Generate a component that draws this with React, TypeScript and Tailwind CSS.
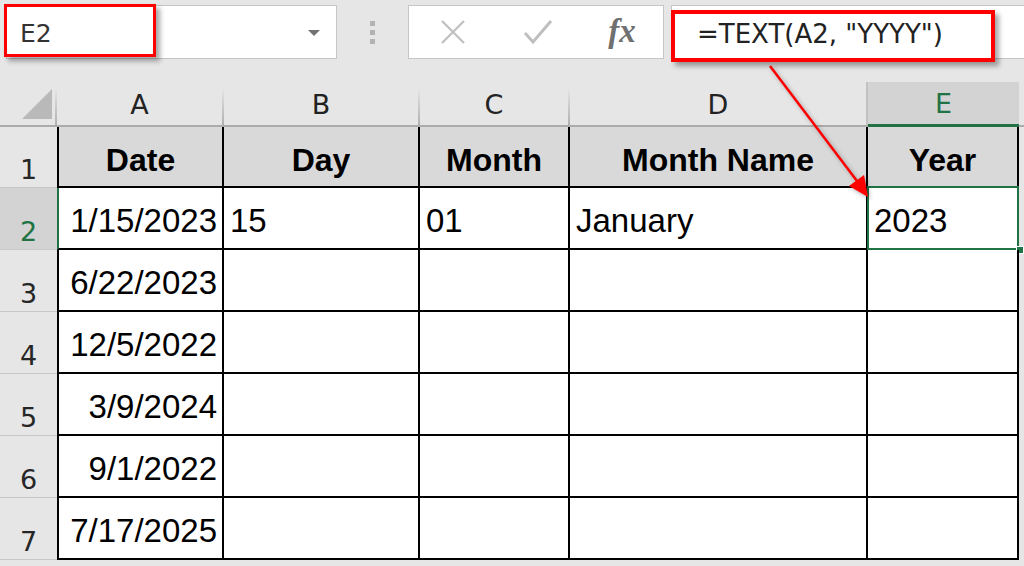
import React from 'react';

const ui = "font-['DejaVu_Sans','Noto_Sans',sans-serif]";
const cellFont = "font-['Liberation_Sans',Arial,sans-serif]";

type Col = { key: string; w: string };

const cols: Col[] = [
  { key: 'A', w: 'w-[167px]' },
  { key: 'B', w: 'w-[196px]' },
  { key: 'C', w: 'w-[150px]' },
  { key: 'D', w: 'w-[298px]' },
  { key: 'E', w: 'w-[151px]' },
];

const headers = ['Date', 'Day', 'Month', 'Month Name', 'Year'];

const rows: string[][] = [
  ['1/15/2023', '15', '01', 'January', '2023'],
  ['6/22/2023', '', '', '', ''],
  ['12/5/2022', '', '', '', ''],
  ['3/9/2024', '', '', '', ''],
  ['9/1/2022', '', '', '', ''],
  ['7/17/2025', '', '', '', ''],
];

function Toolbar() {
  return (
    <div className="relative flex h-[82px] items-start pt-[5px] pl-[6px]">
      {/* name box */}
      <div className="flex h-[54px] w-[331px] items-center justify-between border border-[#c6c6c6] bg-white pl-[13px] pr-[16px] pt-[2px]">
        <span className={`${ui} text-[25px] leading-none text-[#333]`}>E2</span>
        <div className="h-0 w-0 border-x-[6px] border-t-[6px] border-x-transparent border-t-[#737373]" />
      </div>

      <div className="flex h-[54px] w-[71px] flex-col items-center justify-center gap-[4px]">
        <div className="h-[5px] w-[5px] bg-[#b3b3b3]" />
        <div className="h-[5px] w-[5px] bg-[#b3b3b3]" />
        <div className="h-[5px] w-[5px] bg-[#b3b3b3]" />
      </div>

      {/* cancel / enter / fx */}
      <div className="flex h-[54px] w-[256px] items-center border border-[#c6c6c6] bg-white">
        <div className="flex w-[86px] justify-center pl-[2px]">
          <svg width="28" height="28" viewBox="0 0 28 28">
            <path d="M3 3 L25 25 M25 3 L3 25" stroke="#bfbfbf" strokeWidth="2.2" fill="none" />
          </svg>
        </div>
        <div className="flex w-[86px] justify-center">
          <svg width="32" height="28" viewBox="0 0 32 28">
            <path d="M3 15 L11 24 L29 3" stroke="#bfbfbf" strokeWidth="3" fill="none" strokeLinejoin="miter" />
          </svg>
        </div>
        <div className="flex flex-1 justify-center pb-[2px]">
          <span className="font-['Liberation_Serif',serif] text-[33px] font-semibold italic leading-none text-[#707070]">fx</span>
        </div>
      </div>

      {/* formula input */}
      <div className="ml-[7px] flex h-[54px] flex-1 items-center border border-r-0 border-[#c6c6c6] bg-white pl-[25px] pt-[3px]">
        <span className={`${ui} text-[26px] leading-none text-[#222]`}>=TEXT(A2, "YYYY")</span>
      </div>

      {/* red highlight annotations */}
      <div className="pointer-events-none absolute left-[4px] top-[4px] h-[53px] w-[152px] border-[3px] border-[#ff0000] shadow-[4px_4px_5px_rgba(0,0,0,0.35)]" />
      <div className="pointer-events-none absolute left-[671px] top-[10px] h-[52px] w-[324px] border-[4px] border-[#ff0000] shadow-[4px_4px_5px_rgba(0,0,0,0.35)]" />
    </div>
  );
}

function ColumnHeaders() {
  return (
    <div className="flex h-[45px] border-b-2 border-[#acacac]">
      <div className="flex w-[57px] items-end">
        <div className="mb-[6px] ml-[22px] h-[30px] w-[30px] bg-[#b9b9b9] [clip-path:polygon(100%_0,100%_100%,0_100%)]" />
        <div className="ml-auto h-[37px] w-[2px] bg-gradient-to-b from-[#e6e6e6] to-[#b0b0b0]" />
      </div>
      {cols.map((c) => {
        const sel = c.key === 'E';
        return (
          <div
            key={c.key}
            className={`${c.w} flex items-end ${sel ? 'bg-[#d3d3d3] border-b-[3px] border-[#217346] -mb-[2px]' : ''}`}
          >
            <div
              className={`${ui} flex flex-1 justify-center pb-[7px] text-[27px] leading-none ${sel ? 'text-[#217346]' : 'text-[#222]'}`}
            >
              {c.key}
            </div>
            {!sel && c.key !== 'D' && (
              <div className="h-[37px] w-[2px] bg-gradient-to-b from-[#e6e6e6] to-[#b0b0b0]" />
            )}
            {c.key === 'D' && <div className="h-[43px] w-[2px] bg-[#c2c2c2]" />}
          </div>
        );
      })}
    </div>
  );
}

function RowHead({ n, sel, h }: { n: number; sel?: boolean; h: string }) {
  return (
    <div
      className={`${h} flex w-[57px] items-end justify-center border-b border-[#c8c8c8] pb-[4px] ${ui} text-[27px] leading-none ${
        sel ? 'bg-[#d3d3d3] text-[#217346]' : 'bg-[#e6e6e6] text-[#262626]'
      }`}
    >
      {n}
    </div>
  );
}

function App() {
  return (
    <div className="h-[566px] w-[1024px] overflow-hidden bg-[#e6e6e6]">
      <div className="relative">
        <Toolbar />
        <ColumnHeaders />

        {/* header row 1 */}
        <div className="flex h-[61px]">
          <RowHead n={1} h="h-[61px]" />
          {cols.map((c, i) => (
            <div
              key={c.key}
              className={`${c.w} flex items-end justify-center border-b-2 border-r-2 border-black bg-[#d9d9d9] pb-[10px] ${
                i === 0 ? 'border-l-2' : ''
              } ${cellFont} text-[32px] font-bold leading-none text-black`}
            >
              {headers[i]}
            </div>
          ))}
        </div>

        {rows.map((r, ri) => {
          const sel = ri === 0;
          return (
            <div key={ri} className="flex h-[62px]">
              <RowHead n={ri + 2} sel={sel} h="h-[62px]" />
              {cols.map((c, ci) => {
                const right = ci === 0;
                const isE2 = sel && ci === 4;
                return (
                  <div
                    key={c.key}
                    className={`${c.w} relative flex items-end border-b-2 border-r-2 border-black bg-white pb-[11px] ${
                      ci === 0 ? (sel ? 'border-l-2 border-l-[#217346]' : 'border-l-2') : ''
                    } ${right ? 'justify-end pr-[5px]' : 'justify-start pl-[6px]'} ${cellFont} text-[33px] leading-none text-black`}
                  >
                    {r[ci]}
                    {isE2 && (
                      <>
                        <div className="pointer-events-none absolute -left-[1px] -top-[2px] bottom-[-2px] right-[-2px] border-2 border-[#217346]" />
                        <div className="absolute -bottom-[6px] -right-[7px] h-[8px] w-[8px] border border-white bg-[#217346]" />
                      </>
                    )}
                  </div>
                );
              })}
            </div>
          );
        })}

        {/* annotation arrow */}
        <svg
          className="pointer-events-none absolute left-0 top-0 drop-shadow-[2px_2px_2px_rgba(0,0,0,0.3)]"
          width="1024"
          height="566"
          viewBox="0 0 1024 566"
        >
          <line x1="770" y1="66" x2="857" y2="181" stroke="#ff0000" strokeWidth="2.5" />
          <polygon points="868,197 849,186 864,175" fill="#ff0000" />
        </svg>
      </div>
    </div>
  );
}

export default App;
